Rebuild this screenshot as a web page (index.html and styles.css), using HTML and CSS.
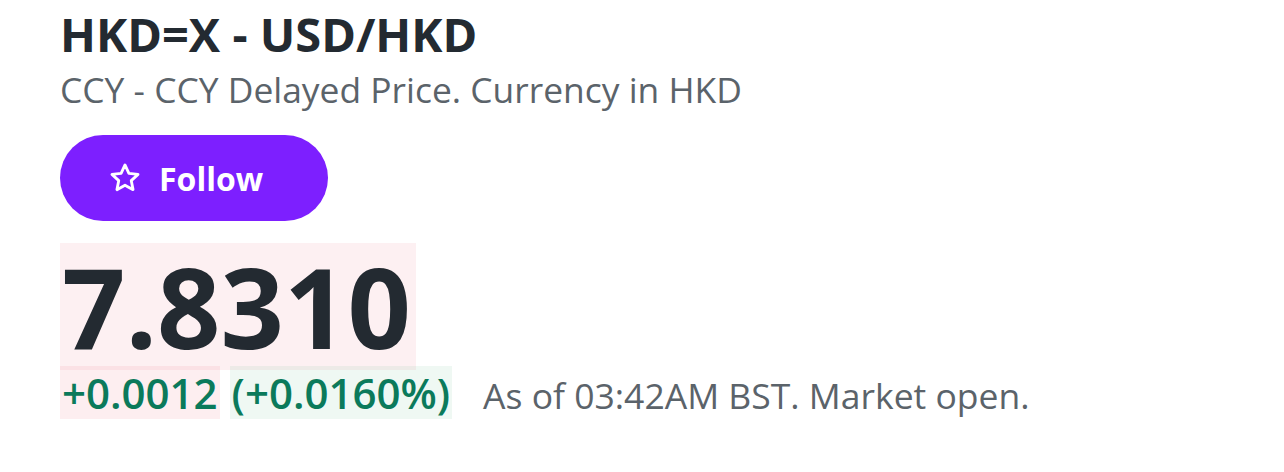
FILE: index.html
```html
<!DOCTYPE html>
<html lang="en">
<head>
<meta charset="utf-8">
<title>USD/HKD</title>
<link rel="stylesheet" href="styles.css">
</head>
<body>
<main class="quote">
  <h1 class="title">HKD=X - USD/HKD</h1>
  <div class="subtitle">CCY - CCY Delayed Price. Currency in HKD</div>
  <button class="follow" type="button">
    <svg class="star" viewBox="0 0 24 24" width="34" height="34" aria-hidden="true">
      <path d="M12 2.8l2.75 5.9 6.45.75-4.78 4.4 1.27 6.37L12 17.05l-5.69 3.17 1.27-6.37L2.8 9.45l6.45-.75z" fill="none" stroke="#fff" stroke-width="2" stroke-linejoin="round"/>
    </svg>
    <span>Follow</span>
  </button>
  <div class="price-block">
    <div class="price">7.8310</div>
  </div>
  <div class="change-row">
    <span class="chg abs">+0.0012</span>
    <span class="chg pct">(+0.0160%)</span>
    <span class="asof">As of 03:42AM BST. Market open.</span>
  </div>
</main>
</body>
</html>
```

FILE: styles.css
```css
html, body {
  margin: 0;
  padding: 0;
  background: #fff;
}
body {
  font-family: "Open Sans", "Noto Sans", sans-serif;
  color: #232a31;
}
.quote {
  padding: 6px 0 0 60px;
  display: flex;
  flex-direction: column;
  align-items: flex-start;
}
.title {
  margin: 0;
  font-size: 47px;
  font-weight: 700;
  line-height: 56px;
  color: #232a31;
}
.subtitle {
  font-size: 35.4px;
  line-height: 42px;
  color: #5b636a;
  margin-top: 6px;
}
.follow {
  margin-top: 25px;
  height: 86px;
  width: 268px;
  border: none;
  border-radius: 43px;
  background: #7d1fff;
  color: #fff;
  font-family: inherit;
  font-size: 32px;
  font-weight: 700;
  display: flex;
  align-items: center;
  gap: 17px;
  padding: 0 0 0 48px;
}
.star { display: block; }
.price-block {
  margin-top: 22px;
  background: rgba(240, 150, 160, 0.14);
  padding: 0 5px 0 2px;
}
.price {
  font-size: 111px;
  font-weight: 700;
  line-height: 127px;
  color: #232a31;
}
.change-row {
  display: flex;
  align-items: baseline;
  margin-top: -4px;
}
.chg {
  font-size: 42px;
  font-weight: 600;
  line-height: 53px;
  color: #0b7a5b;
  padding: 0 2px;
}
.abs { background: rgba(240, 150, 160, 0.16); }
.pct { background: rgba(120, 200, 160, 0.12); margin-left: 10px; }
.asof {
  font-size: 35.5px;
  color: #5b636a;
  margin-left: 31px;
}
```
